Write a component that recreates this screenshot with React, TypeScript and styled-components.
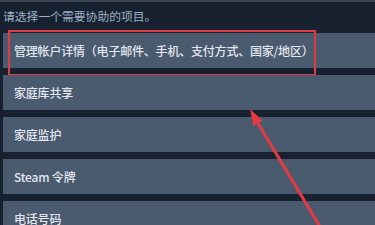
import React from 'react'
import styled, { createGlobalStyle } from 'styled-components'

const GlobalStyle = createGlobalStyle`
    html, body {
        margin: 0;
        padding: 0;
        background: #18212f;
    }
    body {
        font-family: "Noto Sans CJK SC", "Noto Sans", sans-serif;
        overflow: hidden;
    }
`

const Page = styled.div`
    position: relative;
    width: 375px;
    height: 225px;
    overflow: hidden;
    border-top: 2px solid #3a4350;
    box-sizing: border-box;
`

const Title = styled.div`
    height: 26px;
    padding-left: 3px;
    display: flex;
    align-items: center;
    font-size: 11.8px;
    color: #9db1c8;
`

const List = styled.div`
    display: flex;
    flex-direction: column;
    gap: 7px;
    margin-top: 5px;
    padding-left: 3px;
`

const Row = styled.div`
    position: relative;
    height: 35px;
    display: flex;
    align-items: center;
    padding-left: 11px;
    background: #4a5a6f;
    color: #e2e7ee;
    font-size: 12px;
    font-weight: 500;
    letter-spacing: -0.2px;
`

const Highlight = styled.div`
    position: absolute;
    left: 5px;
    top: -3px;
    width: 308px;
    height: 46px;
    border: 2px solid #e03a42;
    box-sizing: border-box;
    pointer-events: none;
`

const ArrowLayer = styled.svg`
    position: absolute;
    left: 0;
    top: 0;
    pointer-events: none;
`

const items = ['家庭库共享', '家庭监护', 'Steam 令牌', '电话号码']

export default function App() {
    return (
        <Page>
            <GlobalStyle />
            <Title>请选择一个需要协助的项目。</Title>
            <List>
                <Row>
                    管理帐户详情（电子邮件、手机、支付方式、国家/地区）
                    <Highlight />
                </Row>
                {items.map((label) => (
                    <Row key={label}>{label}</Row>
                ))}
            </List>
            <ArrowLayer width="375" height="225" viewBox="0 0 375 225">
                <line x1="256" y1="118" x2="322" y2="228" stroke="#e63a40" strokeWidth="3" />
                <polygon points="250,107 253.5,124 262.5,118.5" fill="#e63a40" />
            </ArrowLayer>
        </Page>
    )
}
